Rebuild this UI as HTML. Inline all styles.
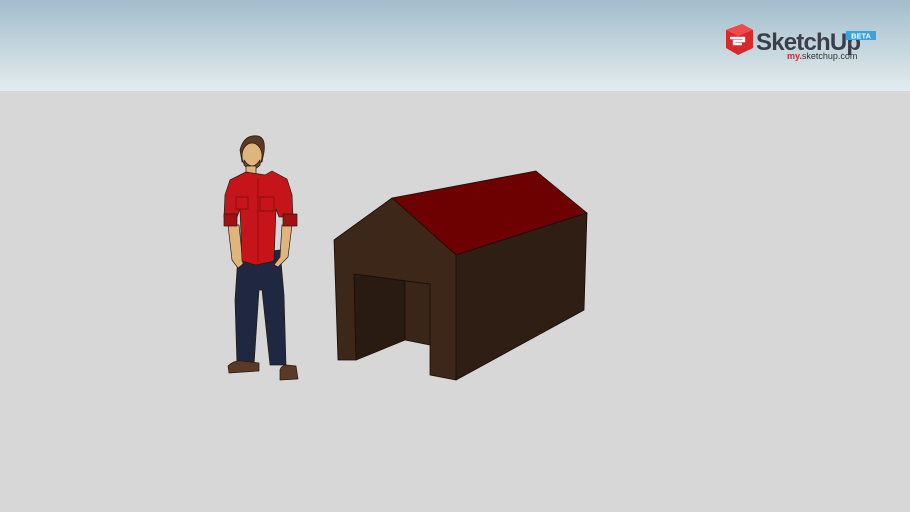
<!DOCTYPE html>
<html><head><style>
html,body{margin:0;padding:0;width:910px;height:512px;overflow:hidden}
body{background:#d7d7d7;position:relative;font-family:"Liberation Sans",sans-serif}
.sky{position:absolute;left:0;top:0;width:910px;height:91px;background:linear-gradient(#a2bdcc,#e3ecef)}
</style></head><body>
<div class="sky"></div>
<svg width="910" height="512" style="position:absolute;left:0;top:0">
 <g>
  <polygon points="726,30 742,24 753,30 753,48 738,55 726,48" fill="#d9272b"/>
  <polygon points="742,24 753,30 738,36 726,30" fill="#ef4a4c"/>
  <path d="M730,38 h14 v3 h-10 v3 h8" stroke="#fff" stroke-width="2.4" fill="none"/>
  <text x="756" y="50" font-size="24" font-weight="bold" fill="#3a3f4a" letter-spacing="-0.8">SketchUp</text>
  <rect x="846" y="31" width="30" height="9" fill="#3aa2dc"/>
  <text x="861" y="38.5" font-size="7.5" fill="#fff" text-anchor="middle" font-weight="bold">BETA</text>
  <text x="787" y="59" font-size="9" fill="#333"><tspan fill="#d9272b" font-weight="bold">my.</tspan>sketchup.com</text>
 </g>
 <!-- house -->
 <g stroke="#1a0e08" stroke-width="0.8" stroke-linejoin="round">
  <polygon points="392,198 536,171 587,213 456,255" fill="#6d0000"/>
  <polygon points="456,255 587,213 584,310 456,380" fill="#2e1e14"/>
  <polygon points="334,240 392,198 456,255 456,380 430,375 430,284 354,274 356,360 338,360" fill="#3c2719"/>
  <polygon points="354,274 405,281 405,340 356,360" fill="#2a1b12"/>
  <polygon points="405,281 430,284 430,345 405,340" fill="#3a2618"/>
 </g>
 <!-- person -->
 <g stroke="#2a1a10" stroke-width="0.7" stroke-linejoin="round">
  <path d="M240,150 q4,-16 18,-14 q8,2 6,16 l-2,10 l-20,0 z" fill="#5a3a26"/>
  <ellipse cx="252" cy="156" rx="10" ry="13" fill="#e0b57d"/>
  <path d="M244,160 q8,12 16,0 l0,5 q-8,9 -16,0z" fill="#6a4a36"/>
  <rect x="246" y="166" width="10" height="8" fill="#e0b57d"/>
  <!-- jeans -->
  <path d="M238,255 l-3,45 l2,65 l17,0 l5,-75 l3,0 l8,75 l16,0 l-2,-70 l-4,-45 z" fill="#1f2840"/>
  <!-- arms -->
  <path d="M228,225 l4,35 l6,8 l5,-4 l-4,-39z M282,225 l-2,32 l-6,8 l4,2 l10,-10 l4,-32z" fill="#e0b57d"/>
  <!-- shirt -->
  <path d="M246,172 l-16,8 l-5,15 l-1,22 l13,0 l3,-8 l2,52 l14,4 l18,-4 l2,-52 l3,8 l14,0 l-1,-22 l-5,-16 l-15,-8 l-7,4 z" fill="#c5151a"/>
  <rect x="224" y="214" width="13" height="12" fill="#a01015"/>
  <rect x="283" y="214" width="14" height="12" fill="#a01015"/>
  <path d="M258,178 l0,84" stroke="#7a0a0d" fill="none"/>
  <rect x="236" y="197" width="12" height="12" fill="none" stroke="#7a0a0d"/>
  <rect x="260" y="197" width="14" height="14" fill="none" stroke="#7a0a0d"/>
  <path d="M228,366 q6,-6 14,-5 l17,2 l0,8 l-30,2z" fill="#5a3a26"/>
  <path d="M280,370 q1,-4 6,-5 l10,1 l2,13 l-18,1z" fill="#5a3a26"/>
 </g>
</svg>
</body></html>
